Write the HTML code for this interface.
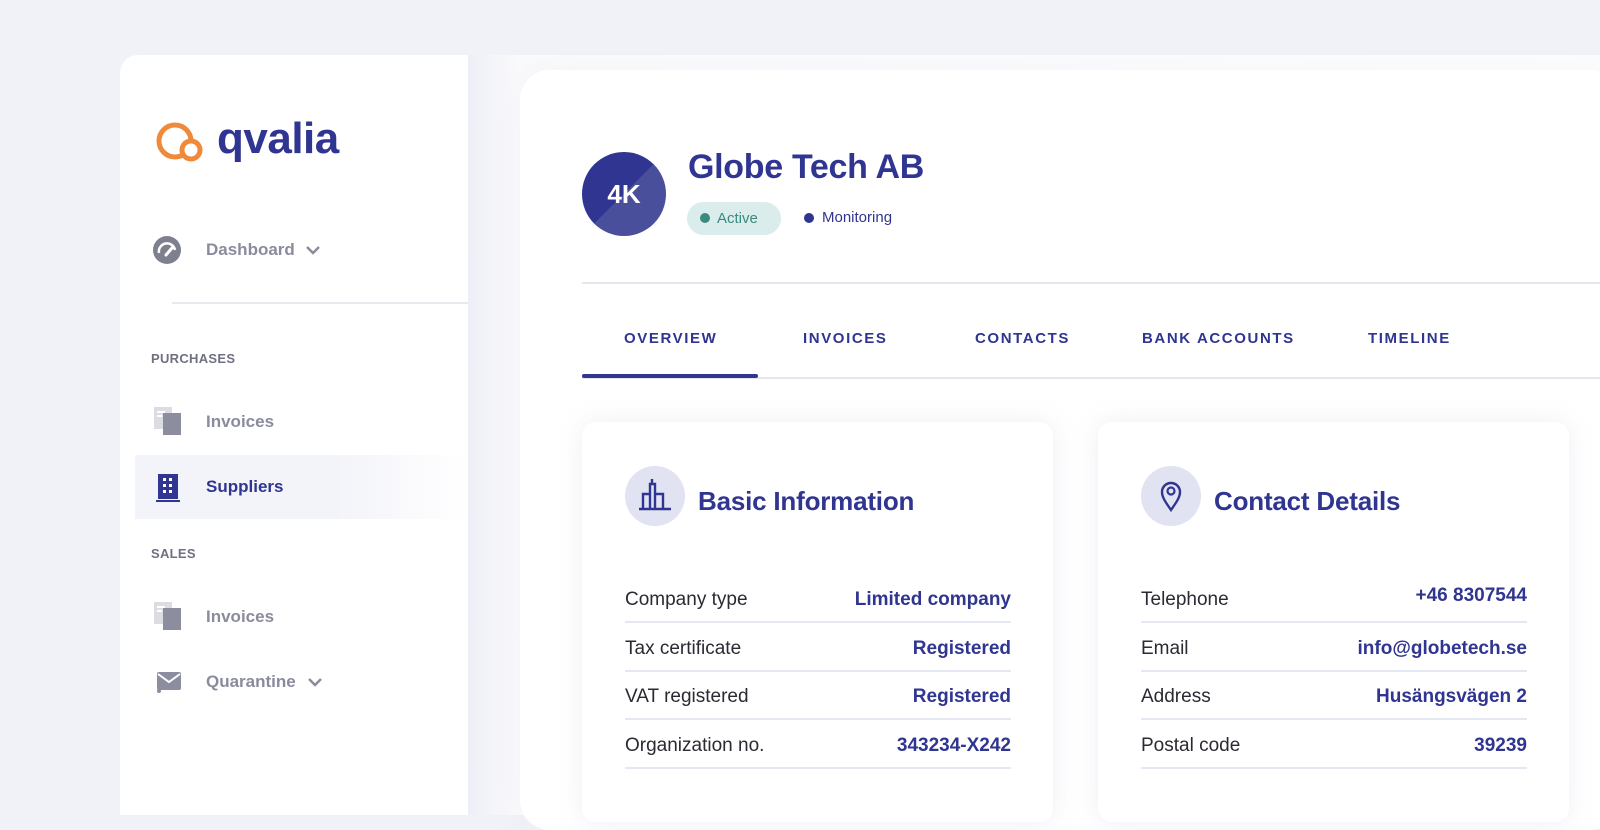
<!DOCTYPE html>
<html><head><meta charset="utf-8"><style>
*{margin:0;padding:0;box-sizing:border-box}
body{width:1600px;height:800px;overflow:hidden;background:#f1f2f7;font-family:"Liberation Sans",sans-serif;position:relative}
.side{position:absolute;left:120px;top:55px;width:348px;height:760px;background:#fff;border-top-left-radius:18px}
.main{position:absolute;left:468px;top:55px;width:1132px;height:760px;background:linear-gradient(90deg,#eeeff6 0,#fafafc 50px,#fdfdfe 100%)}
.inner{position:absolute;left:520px;top:70px;width:1100px;height:760px;background:#fff;border-radius:30px;box-shadow:0 0 30px rgba(220,222,235,.2)}
.navtxt{position:absolute;font-size:17px;font-weight:bold;color:#8a8b9c}
.sec{position:absolute;left:151px;font-size:13px;font-weight:bold;color:#6f7080;letter-spacing:.3px}
.title{position:absolute;left:688px;top:148px;font-size:34px;font-weight:bold;color:#2f3590;letter-spacing:-.3px}
.tab{position:absolute;top:330px;font-size:15px;font-weight:bold;color:#2f3590;letter-spacing:1.6px}
.card{position:absolute;top:422px;width:471px;height:400px;background:#fff;border-radius:14px;box-shadow:0 0 24px rgba(200,202,220,.3)}
.ic{position:absolute;left:43px;top:44px;width:60px;height:60px;border-radius:50%;background:#e1e2f2}
.ch{position:absolute;left:116px;top:64px;font-size:26px;font-weight:bold;color:#2f3590;letter-spacing:-.2px}
.row{position:absolute;left:43px;width:386px;height:49px;border-bottom:2px solid #e6e7f4;font-size:19px}
.row .l{position:absolute;left:0;top:15px;color:#2a2a33}
.row .r{position:absolute;right:0;top:15px;color:#2f3590;font-weight:bold}
</style></head><body>
<div class="side"></div>
<div class="main"></div>
<div class="inner"></div>

<svg style="position:absolute;left:155px;top:121px" width="54" height="44" viewBox="0 0 54 44"><circle cx="20" cy="20" r="16" fill="none" stroke="#f08a3a" stroke-width="5"/><circle cx="36" cy="29" r="9" fill="#fff" stroke="#f08a3a" stroke-width="5"/></svg>
<div style="position:absolute;left:217px;top:114px;font-size:44px;font-weight:bold;color:#2f3590;letter-spacing:-0.5px">qvalia</div>

<svg style="position:absolute;left:153px;top:236px" width="28" height="28" viewBox="0 0 28 28"><circle cx="14" cy="14" r="14" fill="#7f808f"/><path d="M6 17a8 8 0 0 1 16-3" fill="none" stroke="#fff" stroke-width="2.5"/><path d="M13 19l6-7" stroke="#fff" stroke-width="3" stroke-linecap="round"/></svg>
<div class="navtxt" style="left:206px;top:240px">Dashboard</div>
<svg style="position:absolute;left:305px;top:244px" width="16" height="12"><path d="M2 3l6 6 6-6" fill="none" stroke="#8a8b9c" stroke-width="2.5"/></svg>
<div style="position:absolute;left:172px;top:302px;width:296px;height:2px;background:#e8e9ef"></div>

<div class="sec" style="top:351px">PURCHASES</div>
<svg style="position:absolute;left:154px;top:407px" width="28" height="28"><rect x="0" y="0" width="18" height="22" fill="#dcdde3"/><rect x="9" y="6" width="18" height="22" fill="#8c8d9e"/><rect x="3" y="4" width="8" height="2" fill="#fff"/><rect x="3" y="8" width="5" height="2" fill="#fff"/></svg>
<div class="navtxt" style="left:206px;top:412px">Invoices</div>
<div style="position:absolute;left:135px;top:455px;width:333px;height:64px;background:linear-gradient(90deg,#f3f4f9 60%,#fff)"></div>
<svg style="position:absolute;left:156px;top:474px" width="24" height="28"><rect x="2" y="0" width="20" height="25" fill="#2f3590"/><g fill="#fff"><rect x="7" y="4" width="3" height="3"/><rect x="13" y="4" width="3" height="3"/><rect x="7" y="10" width="3" height="3"/><rect x="13" y="10" width="3" height="3"/><rect x="7" y="16" width="3" height="3"/><rect x="13" y="16" width="3" height="3"/></g><rect x="0" y="26" width="24" height="2" fill="#2f3590"/></svg>
<div class="navtxt" style="left:206px;top:477px;color:#2f3590">Suppliers</div>

<div class="sec" style="top:546px">SALES</div>
<svg style="position:absolute;left:154px;top:602px" width="28" height="28"><rect x="0" y="0" width="18" height="22" fill="#dcdde3"/><rect x="9" y="6" width="18" height="22" fill="#8c8d9e"/><rect x="3" y="4" width="8" height="2" fill="#fff"/><rect x="3" y="8" width="5" height="2" fill="#fff"/></svg>
<div class="navtxt" style="left:206px;top:607px">Invoices</div>
<svg style="position:absolute;left:155px;top:670px" width="28" height="24"><rect x="2" y="2" width="24" height="18" rx="2" fill="#8c8d9e"/><path d="M3 4l11 8 11-8" fill="none" stroke="#fff" stroke-width="2"/><circle cx="4" cy="21" r="2" fill="#8c8d9e"/></svg>
<div class="navtxt" style="left:206px;top:672px">Quarantine</div>
<svg style="position:absolute;left:307px;top:676px" width="16" height="12"><path d="M2 3l6 6 6-6" fill="none" stroke="#8a8b9c" stroke-width="2.5"/></svg>

<div style="position:absolute;left:582px;top:152px;width:84px;height:84px;border-radius:50%;background:linear-gradient(135deg,#2f3590 50%,#4a4f9c 50%);color:#fff;font-size:26px;font-weight:bold;text-align:center;line-height:84px">4K</div>
<div class="title">Globe Tech AB</div>
<div style="position:absolute;left:687px;top:202px;width:94px;height:33px;border-radius:17px;background:#daeceb;color:#3a8a80;font-size:15px;line-height:33px;padding-left:30px">Active</div>
<div style="position:absolute;left:700px;top:213px;width:10px;height:10px;border-radius:50%;background:#3a8a80"></div>
<div style="position:absolute;left:804px;top:213px;width:10px;height:10px;border-radius:50%;background:#2f3590"></div>
<div style="position:absolute;left:822px;top:209px;font-size:15px;color:#2f3590">Monitoring</div>

<div style="position:absolute;left:582px;top:282px;width:1018px;height:2px;background:#e6e7ee"></div>
<div class="tab" style="left:624px">OVERVIEW</div>
<div class="tab" style="left:803px">INVOICES</div>
<div class="tab" style="left:975px">CONTACTS</div>
<div class="tab" style="left:1142px">BANK ACCOUNTS</div>
<div class="tab" style="left:1368px">TIMELINE</div>
<div style="position:absolute;left:582px;top:377px;width:1018px;height:2px;background:#e6e7ee"></div>
<div style="position:absolute;left:582px;top:374px;width:176px;height:4px;border-radius:2px;background:#2f3590"></div>

<div class="card" style="left:582px">
<div class="ic"><svg width="60" height="60"><g fill="none" stroke="#2f3590" stroke-width="2.4"><path d="M14 43h32M18 42V28h7v14M25 42V18h5v24M30 42V28h8v14M27 18v-5"/></g></svg></div>
<div class="ch">Basic Information</div>
<div class="row" style="top:152px"><span class="l">Company type</span><span class="r">Limited company</span></div>
<div class="row" style="top:201px"><span class="l">Tax certificate</span><span class="r">Registered</span></div>
<div class="row" style="top:249px"><span class="l">VAT registered</span><span class="r">Registered</span></div>
<div class="row" style="top:298px"><span class="l">Organization no.</span><span class="r">343234-X242</span></div>
</div>
<div class="card" style="left:1098px">
<div class="ic"><svg width="60" height="60"><path d="M30 44c-4-6-9-12-9-18a9 9 0 0 1 18 0c0 6-5 12-9 18z" fill="none" stroke="#2f3590" stroke-width="2.4"/><circle cx="30" cy="25" r="3.5" fill="none" stroke="#2f3590" stroke-width="2.2"/></svg></div>
<div class="ch">Contact Details</div>
<div class="row" style="top:152px"><span class="l">Telephone</span><span class="r" style="top:11px">+46 8307544</span></div>
<div class="row" style="top:201px"><span class="l">Email</span><span class="r">info@globetech.se</span></div>
<div class="row" style="top:249px"><span class="l">Address</span><span class="r">Husängsvägen 2</span></div>
<div class="row" style="top:298px"><span class="l">Postal code</span><span class="r">39239</span></div>
</div>
</body></html>
